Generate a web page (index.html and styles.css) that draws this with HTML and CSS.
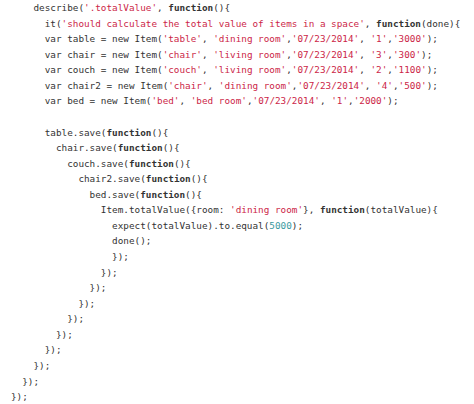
FILE: index.html
```html
<!DOCTYPE html>
<html>
<head>
<meta charset="utf-8">
<link rel="stylesheet" href="styles.css">
</head>
<body>
<pre class="code">    describe(<span class="s">'.totalValue'</span>, <span class="k">function</span>(){
      it(<span class="s">'should calculate the total value of items in a space'</span>, <span class="k">function</span>(done){
      var table = new Item(<span class="s">'table'</span>, <span class="s">'dining room'</span>,<span class="s">'07/23/2014'</span>, <span class="s">'1'</span>,<span class="s">'3000'</span>);
      var chair = new Item(<span class="s">'chair'</span>, <span class="s">'living room'</span>,<span class="s">'07/23/2014'</span>, <span class="s">'3'</span>,<span class="s">'300'</span>);
      var couch = new Item(<span class="s">'couch'</span>, <span class="s">'living room'</span>,<span class="s">'07/23/2014'</span>, <span class="s">'2'</span>,<span class="s">'1100'</span>);
      var chair2 = new Item(<span class="s">'chair'</span>, <span class="s">'dining room'</span>,<span class="s">'07/23/2014'</span>, <span class="s">'4'</span>,<span class="s">'500'</span>);
      var bed = new Item(<span class="s">'bed'</span>, <span class="s">'bed room'</span>,<span class="s">'07/23/2014'</span>, <span class="s">'1'</span>,<span class="s">'2000'</span>);

      table.save(<span class="k">function</span>(){
        chair.save(<span class="k">function</span>(){
          couch.save(<span class="k">function</span>(){
            chair2.save(<span class="k">function</span>(){
              bed.save(<span class="k">function</span>(){
                Item.totalValue({room: <span class="s">'dining room'</span>}, <span class="k">function</span>(totalValue){
                  expect(totalValue).to.equal(<span class="n">5000</span>);
                  done();
                  });
                });
              });
            });
          });
        });
      });
    });
  });
});</pre>
</body>
</html>
```
FILE: styles.css
```css
html, body {
  margin: 0;
  padding: 0;
  background: #ffffff;
}
.code {
  margin: 0;
  padding: 0 0 0 11px;
  font-family: "DejaVu Sans Mono", "Liberation Mono", monospace;
  font-size: 9.33px;
  line-height: 15.56px;
  color: #333333;
  white-space: pre;
}
.s {
  color: #cc1f48;
}
.k {
  font-weight: bold;
}
.n {
  color: #3a9aa0;
}
```
